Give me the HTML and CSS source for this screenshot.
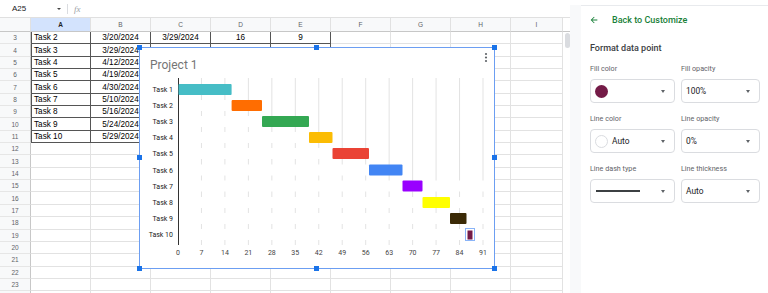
FILE: index.html
```html
<!DOCTYPE html>
<html>
<head>
<meta charset="utf-8">
<link rel="stylesheet" href="styles.css">
</head>
<body>
<div class="app">
  <div class="sheet">
    <div class="fbar">
      <span class="namebox">A25</span>
      <span class="caret"></span>
      <span class="sep"></span>
      <span class="fx">fx</span>
    </div>
    <div class="grid">
      <div class="ch"></div><div class="ch sel">A</div><div class="ch">B</div><div class="ch">C</div><div class="ch">D</div><div class="ch">E</div><div class="ch">F</div><div class="ch">G</div><div class="ch">H</div><div class="ch">I</div><div class="ch last"></div>
      <div class="vscroll"><div class="thumb"></div></div>

      <div class="rh">3</div><div class="c d dl">Task 2</div><div class="c d ctr">3/20/2024</div><div class="c d ctr">3/29/2024</div><div class="c d ctr">16</div><div class="c d ctr">9</div><div class="c"></div><div class="c"></div><div class="c"></div><div class="c"></div>
      <div class="rh">4</div><div class="c d dl">Task 3</div><div class="c d ctr">3/29/2024</div><div class="c d"></div><div class="c d"></div><div class="c d"></div><div class="c"></div><div class="c"></div><div class="c"></div><div class="c"></div>
      <div class="rh">5</div><div class="c d dl">Task 4</div><div class="c d ctr">4/12/2024</div><div class="c d"></div><div class="c d"></div><div class="c d"></div><div class="c"></div><div class="c"></div><div class="c"></div><div class="c"></div>
      <div class="rh">6</div><div class="c d dl">Task 5</div><div class="c d ctr">4/19/2024</div><div class="c d"></div><div class="c d"></div><div class="c d"></div><div class="c"></div><div class="c"></div><div class="c"></div><div class="c"></div>
      <div class="rh">7</div><div class="c d dl">Task 6</div><div class="c d ctr">4/30/2024</div><div class="c d"></div><div class="c d"></div><div class="c d"></div><div class="c"></div><div class="c"></div><div class="c"></div><div class="c"></div>
      <div class="rh">8</div><div class="c d dl">Task 7</div><div class="c d ctr">5/10/2024</div><div class="c d"></div><div class="c d"></div><div class="c d"></div><div class="c"></div><div class="c"></div><div class="c"></div><div class="c"></div>
      <div class="rh">9</div><div class="c d dl">Task 8</div><div class="c d ctr">5/16/2024</div><div class="c d"></div><div class="c d"></div><div class="c d"></div><div class="c"></div><div class="c"></div><div class="c"></div><div class="c"></div>
      <div class="rh">10</div><div class="c d dl">Task 9</div><div class="c d ctr">5/24/2024</div><div class="c d"></div><div class="c d"></div><div class="c d"></div><div class="c"></div><div class="c"></div><div class="c"></div><div class="c"></div>
      <div class="rh">11</div><div class="c d dl">Task 10</div><div class="c d ctr">5/29/2024</div><div class="c d"></div><div class="c d"></div><div class="c d"></div><div class="c"></div><div class="c"></div><div class="c"></div><div class="c"></div>
      <div class="rh">12</div><div class="c"></div><div class="c"></div><div class="c"></div><div class="c"></div><div class="c"></div><div class="c"></div><div class="c"></div><div class="c"></div><div class="c"></div>
      <div class="rh">13</div><div class="c"></div><div class="c"></div><div class="c"></div><div class="c"></div><div class="c"></div><div class="c"></div><div class="c"></div><div class="c"></div><div class="c"></div>
      <div class="rh">14</div><div class="c"></div><div class="c"></div><div class="c"></div><div class="c"></div><div class="c"></div><div class="c"></div><div class="c"></div><div class="c"></div><div class="c"></div>
      <div class="rh">15</div><div class="c"></div><div class="c"></div><div class="c"></div><div class="c"></div><div class="c"></div><div class="c"></div><div class="c"></div><div class="c"></div><div class="c"></div>
      <div class="rh">16</div><div class="c"></div><div class="c"></div><div class="c"></div><div class="c"></div><div class="c"></div><div class="c"></div><div class="c"></div><div class="c"></div><div class="c"></div>
      <div class="rh">17</div><div class="c"></div><div class="c"></div><div class="c"></div><div class="c"></div><div class="c"></div><div class="c"></div><div class="c"></div><div class="c"></div><div class="c"></div>
      <div class="rh">18</div><div class="c"></div><div class="c"></div><div class="c"></div><div class="c"></div><div class="c"></div><div class="c"></div><div class="c"></div><div class="c"></div><div class="c"></div>
      <div class="rh">19</div><div class="c"></div><div class="c"></div><div class="c"></div><div class="c"></div><div class="c"></div><div class="c"></div><div class="c"></div><div class="c"></div><div class="c"></div>
      <div class="rh">20</div><div class="c"></div><div class="c"></div><div class="c"></div><div class="c"></div><div class="c"></div><div class="c"></div><div class="c"></div><div class="c"></div><div class="c"></div>
      <div class="rh">21</div><div class="c"></div><div class="c"></div><div class="c"></div><div class="c"></div><div class="c"></div><div class="c"></div><div class="c"></div><div class="c"></div><div class="c"></div>
      <div class="rh">22</div><div class="c"></div><div class="c"></div><div class="c"></div><div class="c"></div><div class="c"></div><div class="c"></div><div class="c"></div><div class="c"></div><div class="c"></div>
      <div class="rh">23</div><div class="c"></div><div class="c"></div><div class="c"></div><div class="c"></div><div class="c"></div><div class="c"></div><div class="c"></div><div class="c"></div><div class="c"></div>
      <div class="rh"></div><div class="c"></div><div class="c"></div><div class="c"></div><div class="c"></div><div class="c"></div><div class="c"></div><div class="c"></div><div class="c"></div><div class="c"></div>
    </div>

    <div class="chart">
      <svg class="plot" width="354" height="220" viewBox="0 0 354 220">
        <text x="10" y="21" class="ttl">Project 1</text>
        <g class="dots"><circle cx="346" cy="6" r="1.1"/><circle cx="346" cy="9.5" r="1.1"/><circle cx="346" cy="13" r="1.1"/></g>
        <g class="gl">
          <line x1="61.46" y1="30" x2="61.46" y2="197"/>
          <line x1="84.92" y1="30" x2="84.92" y2="197"/>
          <line x1="108.38" y1="30" x2="108.38" y2="197"/>
          <line x1="131.85" y1="30" x2="131.85" y2="197"/>
          <line x1="155.31" y1="30" x2="155.31" y2="197"/>
          <line x1="178.77" y1="30" x2="178.77" y2="197"/>
          <line x1="202.23" y1="30" x2="202.23" y2="197"/>
          <line x1="225.69" y1="30" x2="225.69" y2="197"/>
          <line x1="249.15" y1="30" x2="249.15" y2="197"/>
          <line x1="272.62" y1="30" x2="272.62" y2="197"/>
          <line x1="296.08" y1="30" x2="296.08" y2="197"/>
          <line x1="319.54" y1="30" x2="319.54" y2="197"/>
          <line x1="343" y1="30" x2="343" y2="197"/>
        </g>
        <g class="mask">
          <rect x="39" y="52" width="52.6" height="11"/>
          <rect x="39" y="68" width="83" height="11"/>
          <rect x="39" y="84" width="130" height="11"/>
          <rect x="39" y="100" width="153.5" height="11"/>
          <rect x="39" y="116.5" width="190" height="11"/>
          <rect x="39" y="132.5" width="315" height="11"/>
          <rect x="39" y="149" width="315" height="11"/>
          <rect x="39" y="165" width="315" height="11"/>
          <rect x="39" y="181" width="315" height="11"/>
        </g>
        <line class="axis" x1="38.5" y1="30" x2="38.5" y2="197"/>
        <g class="bars">
          <rect x="38.5" y="36" width="53.1" height="11" rx="1" fill="#46bdc6"/>
          <rect x="91.6" y="52" width="30.4" height="11" rx="1" fill="#ff6d01"/>
          <rect x="122" y="68" width="47" height="11" rx="1" fill="#34a853"/>
          <rect x="169" y="84" width="23.5" height="11" rx="1" fill="#fbbc04"/>
          <rect x="192.5" y="100" width="36.5" height="11" rx="1" fill="#ea4335"/>
          <rect x="229" y="116.5" width="33.5" height="11" rx="1" fill="#4285f4"/>
          <rect x="262.5" y="132.5" width="20" height="11" rx="1" fill="#9900ff"/>
          <rect x="282.5" y="149" width="27.5" height="11" rx="1" fill="#ffff00"/>
          <rect x="310" y="165" width="16.5" height="11" rx="1" fill="#3b2a06"/>
          <rect x="325.5" y="180.5" width="9" height="12" class="selbox"/>
          <rect x="327.5" y="182.5" width="5" height="9" fill="#741b47"/>
        </g>
        <g class="ylab">
          <text x="33" y="44">Task 1</text>
          <text x="33" y="60">Task 2</text>
          <text x="33" y="76">Task 3</text>
          <text x="33" y="92">Task 4</text>
          <text x="33" y="108">Task 5</text>
          <text x="33" y="124.5">Task 6</text>
          <text x="33" y="140.5">Task 7</text>
          <text x="33" y="157">Task 8</text>
          <text x="33" y="173">Task 9</text>
          <text x="33" y="189">Task 10</text>
        </g>
        <g class="xlab">
          <text x="38" y="207.3">0</text>
          <text x="61.46" y="207.3">7</text>
          <text x="84.92" y="207.3">14</text>
          <text x="108.38" y="207.3">21</text>
          <text x="131.85" y="207.3">28</text>
          <text x="155.31" y="207.3">35</text>
          <text x="178.77" y="207.3">42</text>
          <text x="202.23" y="207.3">49</text>
          <text x="225.69" y="207.3">56</text>
          <text x="249.15" y="207.3">63</text>
          <text x="272.62" y="207.3">70</text>
          <text x="296.08" y="207.3">77</text>
          <text x="319.54" y="207.3">84</text>
          <text x="343" y="207.3">91</text>
        </g>
      </svg>
      <span class="hd tl"></span><span class="hd tm"></span><span class="hd tr"></span>
      <span class="hd ml"></span><span class="hd mr"></span>
      <span class="hd bl"></span><span class="hd bm"></span><span class="hd br"></span>
    </div>
  </div>

  <aside class="panel">
    <div class="gutter"></div>
    <div class="card">
      <div class="back">
        <svg class="arrow" width="10" height="10" viewBox="0 0 24 24"><path d="M20 11H7.830l5.59-5.59L12 4l-8 8 8 8 1.41-1.41L7.83 13H20v-2z"/></svg>
        <span>Back to Customize</span>
      </div>
      <div class="title">Format data point</div>
      <div class="fields">
        <div class="field">
          <div class="lbl">Fill color</div>
          <div class="box"><span class="swatch fill"></span><span class="caret2"></span></div>
        </div>
        <div class="field">
          <div class="lbl">Fill opacity</div>
          <div class="box"><span class="val">100%</span><span class="caret2"></span></div>
        </div>
        <div class="field">
          <div class="lbl">Line color</div>
          <div class="box"><span class="swatch auto"></span><span class="val gap">Auto</span><span class="caret2"></span></div>
        </div>
        <div class="field">
          <div class="lbl">Line opacity</div>
          <div class="box"><span class="val">0%</span><span class="caret2"></span></div>
        </div>
        <div class="field">
          <div class="lbl">Line dash type</div>
          <div class="box"><span class="dash"></span><span class="caret2"></span></div>
        </div>
        <div class="field">
          <div class="lbl">Line thickness</div>
          <div class="box"><span class="val">Auto</span><span class="caret2"></span></div>
        </div>
      </div>
    </div>
  </aside>
</div>
</body>
</html>
```

FILE: styles.css
```css
html, body {
  margin: 0;
  padding: 0;
}
body {
  width: 768px;
  height: 293px;
  overflow: hidden;
  background: #fff;
  font-family: "Liberation Sans", Arial, sans-serif;
}
.app {
  display: flex;
  height: 293px;
}

/* ---------- sheet ---------- */
.sheet {
  position: relative;
  width: 570px;
  height: 293px;
  flex: none;
  overflow: hidden;
}
.fbar {
  height: 17px;
  border-bottom: 1px solid #e0e0e0;
  display: flex;
  align-items: center;
  font-size: 8px;
  color: #202124;
}
.namebox {
  margin-left: 12px;
  width: 45px;
}
.caret {
  width: 0;
  height: 0;
  border-left: 2px solid transparent;
  border-right: 2px solid transparent;
  border-top: 2.5px solid #444;
}
.sep {
  width: 1px;
  height: 10px;
  background: #dadce0;
  margin-left: 6px;
}
.fx {
  margin-left: 6px;
  font-family: "Liberation Serif", serif;
  font-style: italic;
  font-size: 9px;
  color: #9aa0a6;
}

.grid {
  display: grid;
  grid-template-columns: 31px repeat(8, 60px) 52px 7px;
  grid-template-rows: 14px;
  grid-auto-rows: 12.35px;
}
.grid > div {
  box-sizing: border-box;
  min-width: 0;
}
.ch {
  background: #f8f9fa;
  border-right: 1px solid #e1e1e1;
  border-bottom: 1px solid #c7c7c7;
  font-size: 6.5px;
  color: #5f6368;
  display: flex;
  align-items: center;
  justify-content: center;
}
.ch.sel {
  background: #d3e3fd;
  color: #1f1f1f;
  font-weight: bold;
}
.ch.last {
  border-right: none;
  background: #fff;
}
.rh {
  background: #f8f9fa;
  border-right: 1px solid #c7c7c7;
  border-bottom: 1px solid #e6e6e6;
  font-size: 6.5px;
  color: #5f6368;
  display: flex;
  align-items: center;
  justify-content: center;
}
.c {
  border-right: 1px solid #e2e2e2;
  border-bottom: 1px solid #e2e2e2;
  font-size: 8.2px;
  padding: 0 3px;
  display: flex;
  align-items: center;
  white-space: nowrap;
  overflow: hidden;
  color: #000;
}
.c.d {
  border-right-color: #555;
  border-bottom-color: #555;
}
.c.dl {
  box-shadow: inset 1px 0 0 #555;
}
.c.ctr {
  justify-content: center;
}
.vscroll {
  grid-column: 11;
  grid-row: 2 / span 22;
  background: #fff;
}
.thumb {
  margin: 1px 0 0 2px;
  width: 5px;
  height: 15px;
  border-radius: 3px;
  background: #dadce0;
}

/* ---------- chart ---------- */
.chart {
  position: absolute;
  left: 139px;
  top: 47px;
  width: 356px;
  height: 222px;
  box-sizing: border-box;
  border: 1px solid #6c9ef2;
  background: #fff;
}
.plot {
  display: block;
}
.ttl {
  font-family: Roboto, "Liberation Sans", sans-serif;
  font-size: 12px;
  fill: #757575;
}
.dots circle {
  fill: #5f6368;
}
.gl line {
  stroke: #e3e3e3;
  stroke-width: 1;
}
.mask rect {
  fill: #fff;
}
.axis {
  stroke: #333;
  stroke-width: 1;
}
.selbox {
  fill: #fff;
  stroke: #8ab4f8;
  stroke-width: 1;
}
.ylab text {
  font-family: Roboto, "Liberation Sans", sans-serif;
  font-size: 7px;
  fill: #222;
  text-anchor: end;
}
.xlab text {
  font-family: Roboto, "Liberation Sans", sans-serif;
  font-size: 7px;
  fill: #444;
  text-anchor: middle;
}
.hd {
  position: absolute;
  width: 5px;
  height: 5px;
  background: #1a73e8;
}
.hd.tl { left: -3px; top: -3px; }
.hd.tm { left: 174px; top: -3px; }
.hd.tr { right: -3px; top: -3px; }
.hd.ml { left: -3px; top: 107px; }
.hd.mr { right: -3px; top: 107px; }
.hd.bl { left: -3px; bottom: -3px; }
.hd.bm { left: 174px; bottom: -3px; }
.hd.br { right: -3px; bottom: -3px; }

/* ---------- side panel ---------- */
.panel {
  flex: 1;
  display: flex;
  padding-top: 5px;
  box-sizing: border-box;
  font-family: Roboto, "Liberation Sans", sans-serif;
}
.gutter {
  width: 11px;
  flex: none;
  background: #f8f9fa;
}
.card {
  flex: 1;
  background: #fff;
  border-top: 1px solid #e8eaed;
  padding: 0 7px 0 9px;
}
.back {
  height: 28px;
  display: flex;
  align-items: center;
  color: #188038;
  font-size: 9px;
  font-weight: 500;
}
.arrow {
  fill: #188038;
  margin-left: -1px;
  margin-right: 13px;
}
.title {
  margin-top: 8px;
  font-size: 9px;
  line-height: 12px;
  font-weight: 500;
  color: #3c4043;
}
.fields {
  margin-top: 10px;
  display: grid;
  grid-template-columns: 85px 79px;
  column-gap: 6px;
  row-gap: 11px;
}
.lbl {
  font-size: 7.2px;
  line-height: 10px;
  color: #5f6368;
  margin-bottom: 5px;
}
.box {
  height: 24px;
  box-sizing: border-box;
  border: 1px solid #dadce0;
  border-radius: 4px;
  display: flex;
  align-items: center;
  padding: 0 9px 0 4px;
}
.caret2 {
  margin-left: auto;
  width: 0;
  height: 0;
  border-left: 2.5px solid transparent;
  border-right: 2.5px solid transparent;
  border-top: 3px solid #5f6368;
}
.swatch {
  width: 13px;
  height: 13px;
  border-radius: 50%;
  box-sizing: border-box;
}
.swatch.fill {
  background: #741b47;
}
.swatch.auto {
  background: #fff;
  border: 1px solid #dadce0;
}
.val {
  font-size: 8.4px;
  color: #202124;
}
.val.gap {
  margin-left: 4px;
}
.dash {
  width: 44px;
  height: 1.5px;
  background: #3c4043;
  margin-left: 1px;
}
```
